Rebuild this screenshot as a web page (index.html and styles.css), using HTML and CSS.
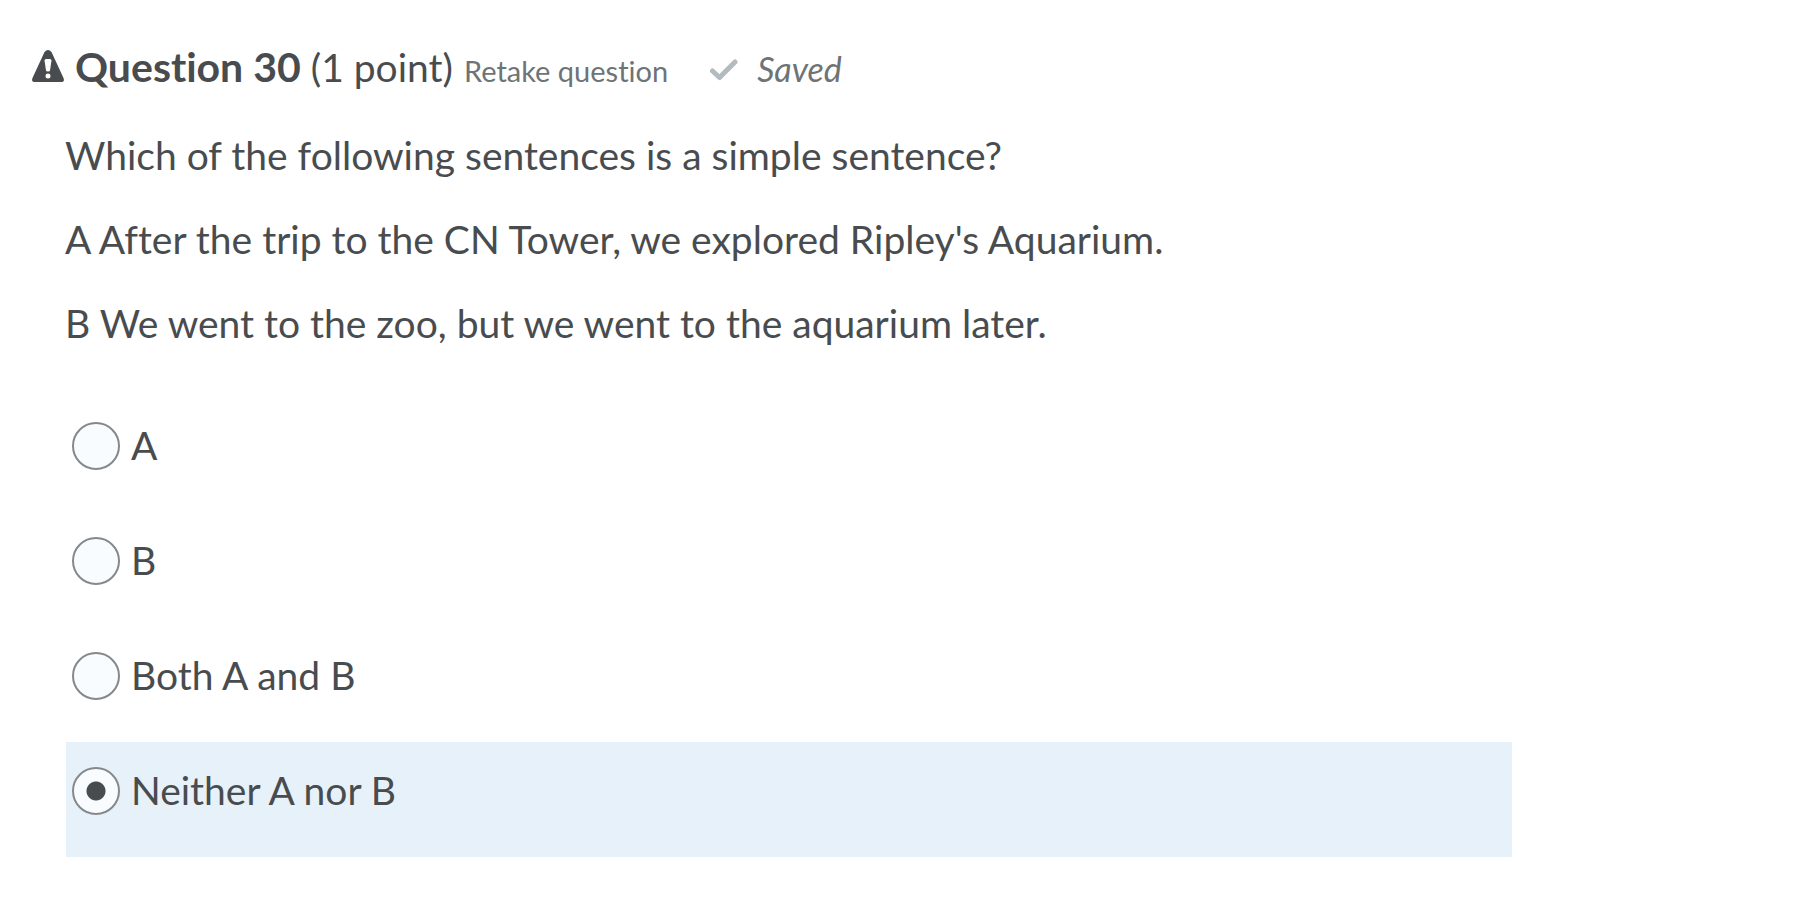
FILE: index.html
```html
<!DOCTYPE html>
<html lang="en">
<head>
<meta charset="utf-8">
<title>Question 30</title>
<link rel="stylesheet" href="styles.css">
</head>
<body>
<main class="question">
  <header class="heading">
    <svg class="warn" viewBox="0 0 32 32" aria-hidden="true"><path fill="currentColor" fill-rule="evenodd" d="M12.500 2Q16 -2 19.500 2L31.500 28Q33 32 29 32H3Q-1 32 .5 28ZM12.500 10.500Q12.500 9 14 9H18Q19.500 9 19.500 10.500L18 20.500Q18 21.500 16 21.500T14 20.500ZM16 23.500A2.500 2.500 0 1 0 16 28.500A2.500 2.500 0 1 0 16 23.500Z"/></svg>
    <h1 class="title">Question 30 <span class="points">(1 point)</span></h1>
    <span class="retake">Retake question</span>
    <svg class="check" viewBox="0 0 30 24" aria-hidden="true"><path d="M3.500 13L10.500 19.500L26 4" fill="none" stroke="currentColor" stroke-width="5" stroke-linecap="round" stroke-linejoin="round"/></svg>
    <em class="saved">Saved</em>
  </header>
  <div class="prompt">
    <p>Which of the following sentences is a simple sentence?</p>
    <p>A After the trip to the CN Tower, we explored Ripley's Aquarium.</p>
    <p>B We went to the zoo, but we went to the aquarium later.</p>
  </div>
  <form class="options">
    <label class="option"><input type="radio" name="answer">A</label>
    <label class="option"><input type="radio" name="answer">B</label>
    <label class="option"><input type="radio" name="answer">Both A and B</label>
    <label class="option"><input type="radio" name="answer" checked>Neither A nor B</label>
  </form>
</main>
</body>
</html>
```
FILE: styles.css
```css
body {
  margin: 0;
  background: #fff;
  color: #494c4e;
  font-family: Lato, sans-serif;
  font-size: 39px;
  font-variant-ligatures: none;
}
.question { padding: 39px 32px; }
.heading { display: flex; align-items: baseline; height: 56px; line-height: 56px; }
.warn { width: 32px; height: 32px; margin-right: 11px; }
.title { margin: 0; font-size: 41px; font-weight: 700; }
.points { font-size: 39px; font-weight: 400; }
.retake { margin-left: 11px; font-size: 29px; color: #6e7376; }
.check { width: 30px; height: 24px; margin-left: 41px; color: #b1bbc0; }
.saved { margin-left: 18px; font-size: 34px; color: #6e7376; }
.prompt { padding: 32px 33px 0; }
.prompt p { margin: 0 0 28px; line-height: 56px; }
.options { display: flex; flex-direction: column; margin: 46px 250px 0 34px; }
.option { display: flex; align-items: flex-start; gap: 11px; height: 115px; box-sizing: border-box; padding: 25px 6px; line-height: 46px; }
.option:has(:checked) { background: #e7f1fa; }
.option input {
  appearance: none;
  flex: none;
  width: 48px;
  height: 48px;
  margin: 0;
  border: 2px solid #86898c;
  border-radius: 50%;
  background: #f9fcff;
}
.option input:checked { background: radial-gradient(circle, #494c4e 9px, #f9fcff 10px); }
```
